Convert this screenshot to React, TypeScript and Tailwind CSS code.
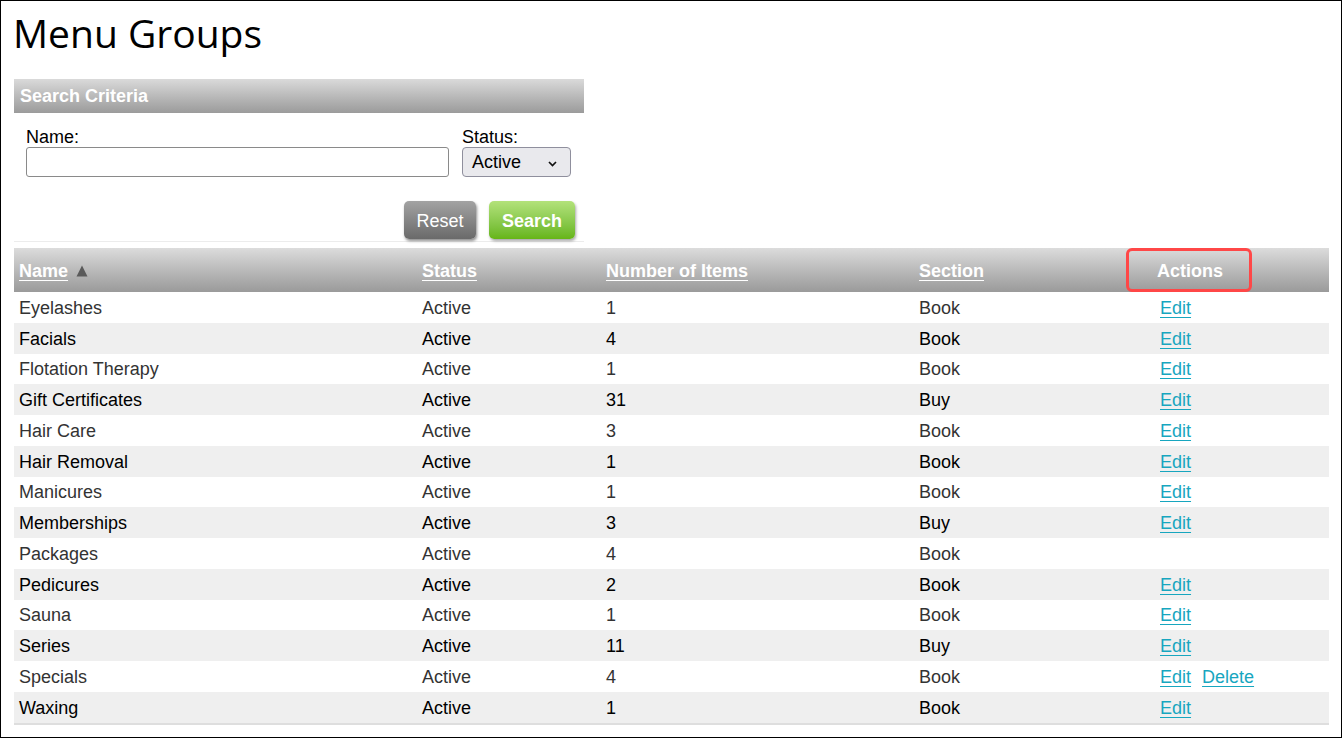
const rows: [string, string, string, string, string[]][] = [
  ["Eyelashes", "Active", "1", "Book", ["Edit"]],
  ["Facials", "Active", "4", "Book", ["Edit"]],
  ["Flotation Therapy", "Active", "1", "Book", ["Edit"]],
  ["Gift Certificates", "Active", "31", "Buy", ["Edit"]],
  ["Hair Care", "Active", "3", "Book", ["Edit"]],
  ["Hair Removal", "Active", "1", "Book", ["Edit"]],
  ["Manicures", "Active", "1", "Book", ["Edit"]],
  ["Memberships", "Active", "3", "Buy", ["Edit"]],
  ["Packages", "Active", "4", "Book", []],
  ["Pedicures", "Active", "2", "Book", ["Edit"]],
  ["Sauna", "Active", "1", "Book", ["Edit"]],
  ["Series", "Active", "11", "Buy", ["Edit"]],
  ["Specials", "Active", "4", "Book", ["Edit", "Delete"]],
  ["Waxing", "Active", "1", "Book", ["Edit"]],
];

const cols = "grid grid-cols-[403px_184px_313px_241px_1fr]";

export default function App() {
  return (
    <div
      className="h-[738px] w-[1342px] border border-black bg-white pl-[13px] pr-[12px] text-[18px] text-black"
      style={{ fontFamily: '"Liberation Sans", Arial, sans-serif' }}
    >
      <h1
        className="-ml-px pt-[12px] text-[39px] leading-[39px] font-normal"
        style={{ fontFamily: '"Open Sans", sans-serif' }}
      >
        Menu Groups
      </h1>

      {/* criteria */}
      <div className="mt-[27px] w-[570px]">
        <div className="flex h-[34px] items-center bg-gradient-to-b from-[#dadada] to-[#9b9b9b] pl-[6px] pt-px font-bold text-white">
          Search Criteria
        </div>
        <div className="flex pl-[12px] pt-[14px]">
          <div className="flex flex-col">
            <label className="leading-[20px]">Name:</label>
            <input className="h-[30px] w-[423px] rounded-[3px] border border-[#8a8a8a] bg-white" />
          </div>
          <div className="ml-[13px] flex flex-col">
            <label className="leading-[20px]">Status:</label>
            <div className="flex h-[30px] w-[109px] items-center justify-between rounded-[4px] border border-[#8f8f9d] bg-[#e9e9ed] pl-[9px] pr-[13px]">
              <span>Active</span>
              <svg width="9" height="6" viewBox="0 0 9 6" className="mt-[3px]">
                <path d="M1 1 L4.5 4.5 L8 1" fill="none" stroke="#111" strokeWidth="1.7" />
              </svg>
            </div>
          </div>
        </div>
        <div className="flex justify-end gap-[13px] pr-[9px] pt-[24px]">
          <button className="h-[38px] w-[72px] rounded-[5px] bg-gradient-to-b from-[#a3a3a3] to-[#6a6a6a] pt-[2px] text-white shadow-[1px_2px_3px_rgba(0,0,0,0.45)]">
            Reset
          </button>
          <button className="h-[38px] w-[86px] rounded-[5px] bg-gradient-to-b from-[#b3e27a] to-[#66b514] pt-[2px] font-bold text-white shadow-[1px_2px_3px_rgba(0,0,0,0.35)]">
            Search
          </button>
        </div>
        <div className="mt-[2px] h-px bg-[#ececec]" />
      </div>

      {/* results */}
      <div className="mt-[6px] border-b-2 border-[#dedede]">
        <div className={`${cols} relative h-[44px] items-center bg-gradient-to-b from-[#dcdcdc] to-[#9a9a9a] pt-[2px] font-bold text-white`}>
          <div className="flex items-center pl-[5px]">
            <span className="underline underline-offset-[3px]">Name</span>
            <svg width="12" height="12" viewBox="0 0 12 12" className="ml-[8px]">
              <path d="M6 0.5 L11.5 11.5 L0.5 11.5 Z" fill="#5a5a5a" />
            </svg>
          </div>
          <div className="pl-[5px] underline underline-offset-[3px]">Status</div>
          <div className="pl-[5px] underline underline-offset-[3px]">Number of Items</div>
          <div className="pl-[5px] underline underline-offset-[3px]">Section</div>
          <div className="pl-[2px]">Actions</div>
          <div className="absolute left-[1112px] top-0 h-[44px] w-[126px] rounded-[6px] border-[3px] border-[#ff4747]" />
        </div>
        {rows.map(([name, status, num, section, actions], i) => (
          <div
            key={name}
            className={`${cols} h-[30.75px] items-center pt-[2px] ${i % 2 === 0 ? "bg-white text-[#333]" : "bg-[#efefef] text-black"}`}
          >
            <div className="pl-[5px]">{name}</div>
            <div className="pl-[5px]">{status}</div>
            <div className="pl-[5px]">{num}</div>
            <div className="pl-[5px]">{section}</div>
            <div className="flex gap-[11px] pl-[5px]">
              {actions.map((a) => (
                <a key={a} href="#" className="text-[#17a6bf] underline underline-offset-[3px]">
                  {a}
                </a>
              ))}
            </div>
          </div>
        ))}
      </div>
    </div>
  );
}
